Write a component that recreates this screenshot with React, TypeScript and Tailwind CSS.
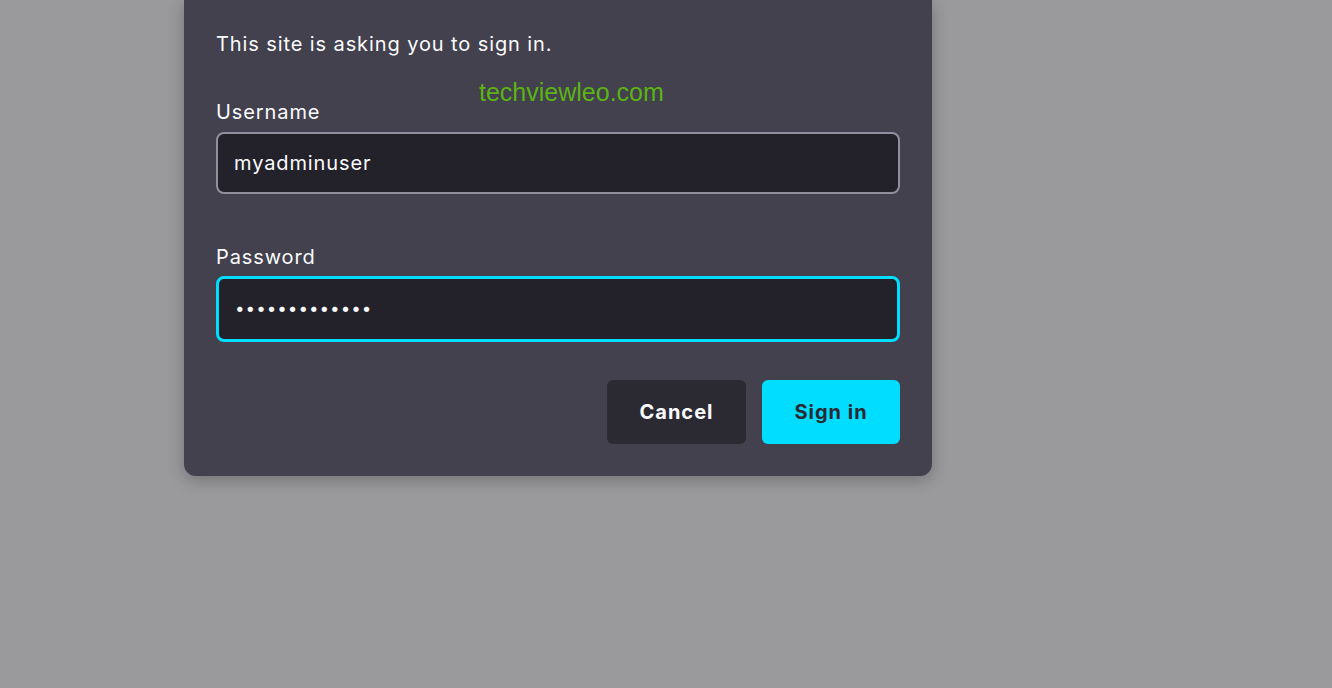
export default function App() {
  return (
    <div className="h-[688px] w-[1332px] overflow-hidden bg-[#9a999c] font-['Inter',sans-serif]">
      <div className="ml-[184px] w-[748px] rounded-b-[12px] bg-[#42414d] px-8 pb-8 pt-[30px] shadow-[0_4px_16px_rgba(0,0,0,0.25)]">
        <p className="text-[20px] leading-[28px] tracking-[0.9px] text-[#fbfbfe]">This site is asking you to sign in.</p>
        <div className="relative mt-[41px]">
          <span className="absolute left-[263px] top-[-25px] font-['Liberation_Sans',sans-serif] text-[25px] text-[#5cb215]">
            techviewleo.com
          </span>
          <label className="block text-[20px] leading-[26px] tracking-[0.9px] text-[#fbfbfe]">Username</label>
          <div className="mt-[7px] flex h-[62px] items-center rounded-[8px] border-2 border-[#8f8f9d] bg-[#23222b] px-4 text-[20px] tracking-[0.9px] text-[#fbfbfe]">
            myadminuser
          </div>
        </div>
        <label className="mt-[50px] block text-[20px] leading-[26px] tracking-[0.9px] text-[#fbfbfe]">Password</label>
        <div className="mt-[6px] flex h-[66px] items-center rounded-[8px] border-[3px] border-[#00ddff] bg-[#23222b] px-4 text-[17px] tracking-[1px] text-[#fbfbfe]">
          •••••••••••••
        </div>
        <div className="mt-[38px] flex justify-end gap-4">
          <button className="h-[64px] w-[139px] rounded-[6px] bg-[#2b2a33] text-[20px] font-bold tracking-[1px] text-[#fbfbfe]">Cancel</button>
          <button className="h-[64px] w-[138px] rounded-[6px] bg-[#00ddff] text-[20px] font-bold tracking-[1px] text-[#2b2a33]">Sign in</button>
        </div>
      </div>
    </div>
  )
}
